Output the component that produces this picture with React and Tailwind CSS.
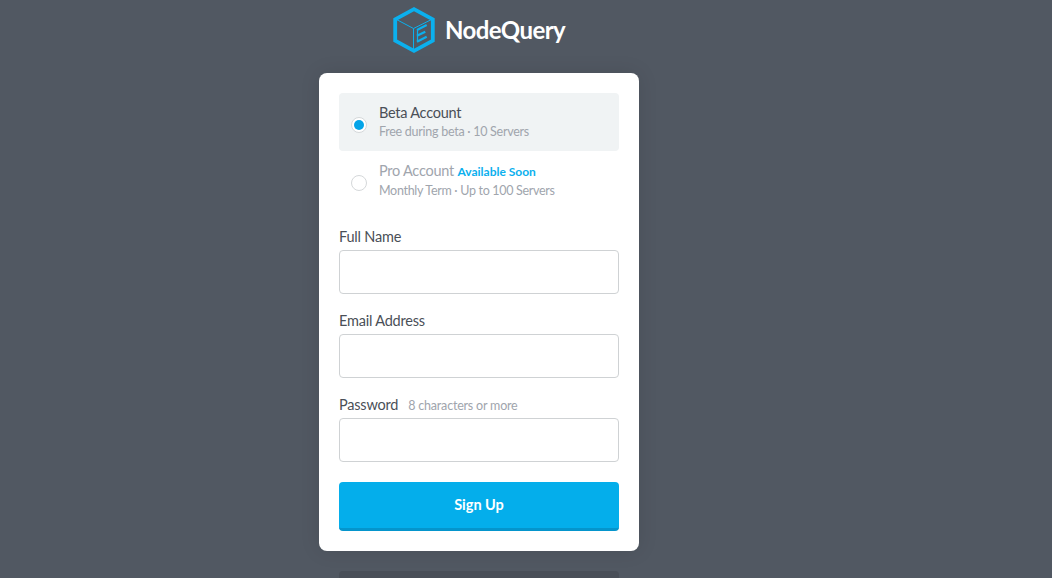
function Logo() {
    return (
        <svg width="42" height="46" viewBox="0 0 42 46" fill="none">
            <path d="M21 2.2L39.8 12.4V33.6L21 43.8L2.2 33.6V12.4Z" stroke="#0bb0ee" strokeWidth="3.8" />
            <path d="M3.5 12.5L20.5 21.5L38.5 12.5M20.5 21.5V43" stroke="#0bb0ee" strokeWidth="1" />
            <path d="M24 23L33.7 18M24 28.8L32.3 24.7M24 34.8L33.7 29.8" stroke="#0bb0ee" strokeWidth="2.2" />
            <path d="M24.5 22.5V35" stroke="#0bb0ee" strokeWidth="1.2" />
        </svg>
    );
}

function Radio({ checked }) {
    return (
        <span className="w-4 h-4 mt-[6px] shrink-0 rounded-full border border-[#d5d8da] bg-white flex items-center justify-center">
            {checked && <span className="w-[10px] h-[10px] rounded-full bg-[#04a4e8]" />}
        </span>
    );
}

function Field({ label, hint }) {
    return (
        <div className="mb-4">
            <label className="block h-[22px] mb-[2px] text-[14.5px] leading-[22px] tracking-[-0.2px] text-[#4a4f57]">
                {label}
                {hint && <span className="ml-[10px] text-[12.5px] text-[#a0a5ad]">{hint}</span>}
            </label>
            <input className="block w-full h-11 rounded border border-[#cfd2d4] bg-white" />
        </div>
    );
}

export default function App() {
    return (
        <div className="h-[578px] overflow-hidden bg-[#515862] font-['Lato','Noto_Sans',sans-serif]">
            <div className="w-[958px]">
                <div className="h-[73px] pt-[7px] flex justify-center">
                    <div className="flex items-start gap-[10px]">
                        <Logo />
                        <span className="mt-[5px] text-[24px] leading-[36px] font-bold tracking-[-0.6px] text-white">NodeQuery</span>
                    </div>
                </div>

                <div className="w-[320px] mx-auto p-5 rounded-lg bg-white shadow-[0_0_20px_rgba(0,0,0,0.1)]">
                    <div className="h-[58px] rounded flex items-center gap-3 pl-[12px] bg-[#f0f3f4]">
                        <Radio checked />
                        <div className="pb-[2px]">
                            <div className="text-[14.5px] leading-5 tracking-[-0.25px] text-[#4a4f57]">Beta Account</div>
                            <div className="text-[12.5px] leading-[17px] tracking-[-0.27px] text-[#a0a5ad]">Free during beta · 10 Servers</div>
                        </div>
                    </div>
                    <div className="h-[58px] mb-[17px] flex items-center gap-3 pl-[12px]">
                        <Radio />
                        <div>
                            <div className="text-[14.5px] leading-5 tracking-[-0.25px] text-[#a0a5ad]">
                                Pro Account <span className="text-[12px] font-bold tracking-normal text-[#0bb0ee]">Available Soon</span>
                            </div>
                            <div className="text-[12.5px] leading-[17px] tracking-[-0.3px] text-[#a0a5ad]">Monthly Term · Up to 100 Servers</div>
                        </div>
                    </div>

                    <Field label="Full Name" />
                    <Field label="Email Address" />
                    <Field label="Password" hint="8 characters or more" />

                    <button className="block w-full h-[49px] mt-5 rounded border-b-[3px] border-[#0595cc] bg-[#04aeeb] text-[14.5px] font-bold text-white">
                        Sign Up
                    </button>
                </div>

                <div className="w-[280px] h-10 mx-auto mt-5 rounded bg-[#494f58]" />
            </div>
        </div>
    );
}
